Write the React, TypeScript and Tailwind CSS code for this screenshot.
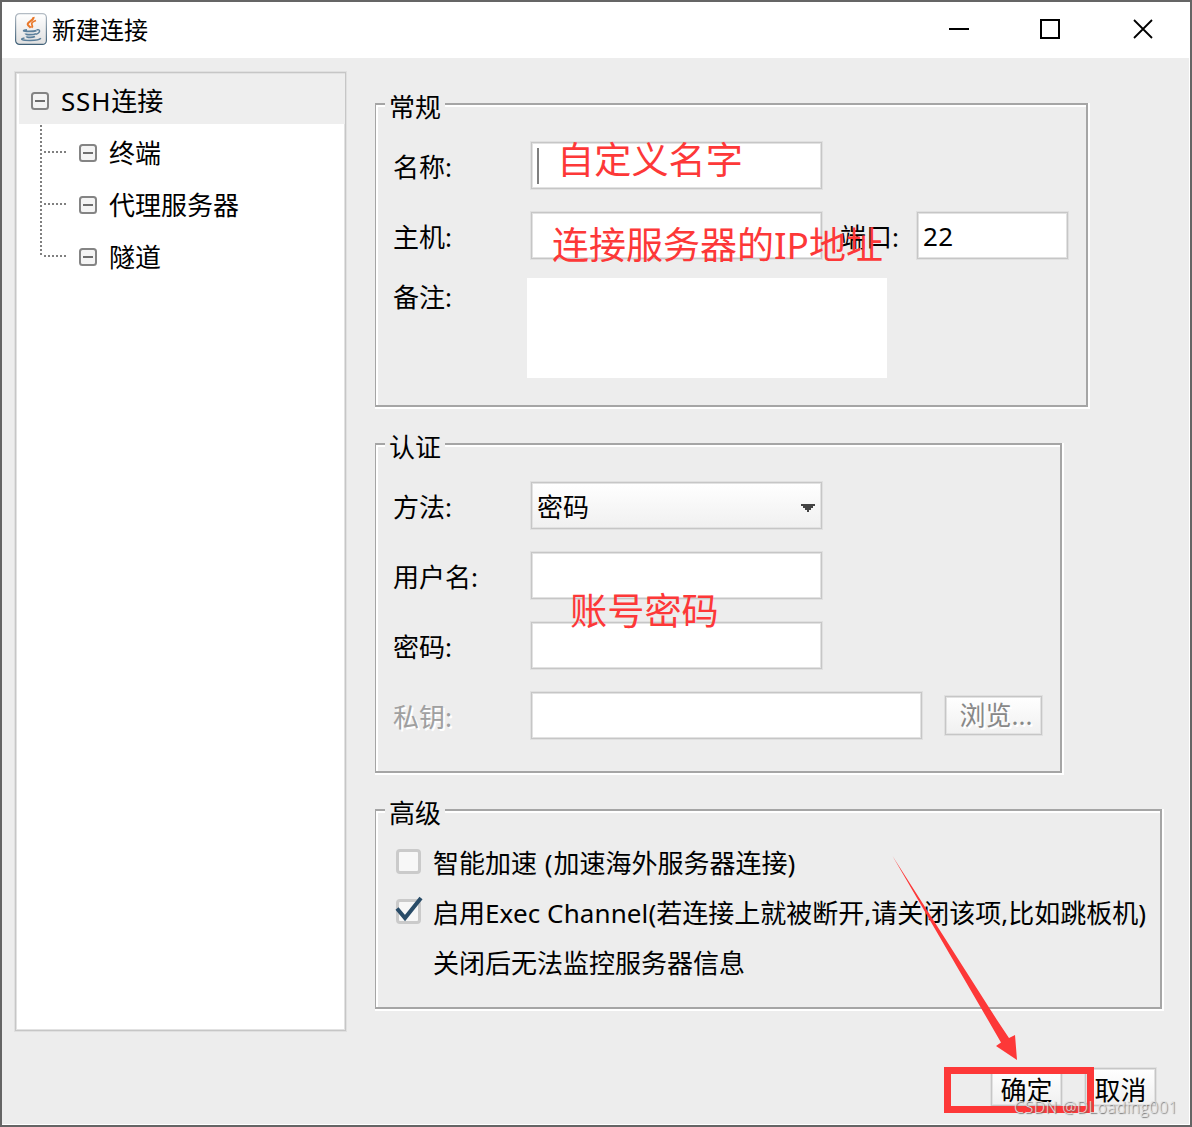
const boxShadow =
  'border border-[#c6c6c6] shadow-[0_0_0_1px_#e0e0e0,inset_0_0_0_1px_#e2e2e2]'

const JavaIcon = () => (
  <svg width="32" height="32" viewBox="0 0 32 32" fill="none">
    <defs>
      <linearGradient id="tile" x1="0" y1="0" x2="0" y2="1">
        <stop offset="0" stopColor="#fff" />
        <stop offset="1" stopColor="#e0e0e0" />
      </linearGradient>
      <linearGradient id="edge" x1="0" y1="0" x2="0" y2="1">
        <stop offset="0" stopColor="#b4bcc4" />
        <stop offset="1" stopColor="#3f6078" />
      </linearGradient>
    </defs>
    <rect x=".6" y=".6" width="30.8" height="30.8" rx="4" fill="url(#tile)" stroke="url(#edge)" strokeWidth="1.2" />
    <path d="M18.500 4c.8 3.500-6.300 4.500-5.700 7.500.3 1.300 2 2.200 2.900 3.200" stroke="#e9782a" strokeWidth="2.200" />
    <path d="M21 7.500c-3 1-4.700 2.200-4.200 3.700.4 1.100 1.400 1.800-.3 3.500" stroke="#e9782a" strokeWidth="1.800" />
    <path d="M12 16.800c-5 .7-4.500 1.600 2 1.600 3 0 6-.3 7.500-.8M10.500 20.500c-.3 1.500 7.500 1.500 10.500.2M11.500 23.300c.2 1.400 6 1.400 8.500.2" stroke="#5b7f9b" strokeWidth="1.700" />
    <path d="M21.500 17c4-1.200 4.500 2.600-.7 4.400" stroke="#5b7f9b" strokeWidth="1.400" />
    <path d="M9.500 25c-5.500 1.100-2.500 2.500 5.500 2.500 7 0 10-.9 10.800-2.300" stroke="#5b7f9b" strokeWidth="1.500" />
  </svg>
)

const MinusIcon = () => (
  <svg width="18" height="18" viewBox="0 0 18 18" className="shrink-0">
    <rect x="1" y="1" width="16" height="16" rx="2.500" fill="#f4f4f4" stroke="#848484" strokeWidth="2" />
    <path d="M4 9h10" stroke="#6e6e6e" strokeWidth="2" />
  </svg>
)

const Group = ({ title, className, children }: { title: string; className: string; children: React.ReactNode }) => (
  <section
    className={`border-2 border-l border-[#a5a5a5] pl-[17px] shadow-[2px_0_0_#fff,0_2px_0_#fff,2px_2px_0_#fff,inset_2px_2px_0_#fff] ${className}`}
  >
    <h2 className="-mt-[14px] -ml-2 h-8 w-[60px] bg-[#ededed] pl-1 leading-8">{title}</h2>
    {children}
  </section>
)

const Field = ({ label, width = 'w-[291px]', disabled = false, children }: {
  label: string
  width?: string
  disabled?: boolean
  children?: React.ReactNode
}) => (
  <div className="mb-[23px] flex h-[47px] items-center">
    <span className={`w-[138px] shrink-0 pt-0.5 ${disabled ? 'text-[#a0a0a0] [text-shadow:2px_2px_0_#fff]' : ''}`}>
      {label}
    </span>
    <div className={`h-[47px] shrink-0 bg-white ${boxShadow} ${width}`} />
    {children}
  </div>
)

const Button = ({ children }: { children: string }) => (
  <button
    className={`h-[38px] w-[71px] bg-gradient-to-b from-white to-[#f0f0f0] pt-1 text-center leading-[34px] whitespace-nowrap ${boxShadow}`}
  >
    {children}
  </button>
)

const App = () => {
  const nodes = ['终端', '代理服务器', '隧道']

  return (
    <div className="relative flex h-[1127px] w-[1192px] flex-col overflow-hidden border-2 border-[#656565] bg-[#ededed] font-['Noto_Sans','Noto_Sans_CJK_SC',sans-serif] text-[26px] leading-9 text-black">
      <header className="flex h-14 shrink-0 items-center bg-white pl-[13px]">
        <div className="-mt-0.5">
          <JavaIcon />
        </div>
        <h1 className="ml-[5px] text-2xl leading-9">新建连接</h1>
        <svg width="206" height="22" className="-mt-0.5 mr-[35px] ml-auto" fill="none" stroke="#000" strokeWidth="2">
          <path d="M0 11h20" />
          <path d="M92 2h18v18h-18z" />
          <path d="M185 2l18 18M203 2l-18 18" strokeWidth="1.800" />
        </svg>
      </header>

      <div className="flex flex-1 border-r border-b border-white">
        <nav className={`mt-[14px] ml-[13px] h-[959px] w-[331px] shrink-0 bg-white ${boxShadow}`}>
          <div className="mt-px ml-[3px] flex h-[50px] items-center bg-[#eee] pt-1 pl-3">
            <MinusIcon />
            <span className="ml-3">
              <span className="tracking-[0.8px]">SSH</span>连接
            </span>
          </div>
          <div className="flex">
            <svg width="26" height="134" className="ml-6 shrink-0" stroke="#808080" strokeWidth="2" strokeDasharray="2 2">
              <path d="M1 1v132M4 28h22M4 80h22M4 132h22" />
            </svg>
            <ul className="pt-[3px]">
              {nodes.map((node) => (
                <li key={node} className="flex h-[52px] items-center pl-[13px]">
                  <MinusIcon />
                  <span className="ml-3">{node}</span>
                </li>
              ))}
            </ul>
          </div>
        </nav>

        <main className="ml-[29px] flex flex-1 flex-col pt-[45px]">
          <Group title="常规" className="h-[304px] w-[713px]">
            <div className="pt-[19px]">
              <Field label="名称:">
                <span className="-ml-[285px] h-9 w-0.5 bg-[#808080]" />
              </Field>
              <Field label="主机:">
                <span className="w-[95px] pt-0.5 pl-[18px]">端口:</span>
                <div className={`flex h-[47px] w-[151px] items-center bg-white pl-[5px] tracking-[0.5px] ${boxShadow}`}>
                  22
                </div>
              </Field>
            </div>
            <div className="-mt-1 flex">
              <span className="w-[134px] pt-px">备注:</span>
              <div className="h-[100px] w-[360px] bg-white" />
            </div>
          </Group>

          <Group title="认证" className="mt-9 h-[330px] w-[687px]">
            <div className="pt-[19px]">
              <div className="mb-[23px] flex h-[47px] items-center">
                <span className="w-[138px] pt-0.5">方法:</span>
                <div
                  className={`flex h-[47px] w-[291px] items-center justify-between bg-gradient-to-b from-white to-[#f0f0f0] pt-0.5 pr-1.5 pl-[5px] ${boxShadow}`}
                >
                  密码
                  <svg width="14" height="8" className="mt-0.5" fill="#444">
                    <path d="M0 0h14v2h-2v2h-2v2H8v2H6V6H4V4H2V2H0z" />
                  </svg>
                </div>
              </div>
              <Field label="用户名:" />
              <Field label="密码:" />
              <Field label="私钥:" width="w-[391px]" disabled>
                <button
                  className={`ml-[23px] h-[39px] w-[97px] bg-gradient-to-b from-white to-[#f0f0f0] pl-[5px] text-center leading-[35px] text-[#888] [text-shadow:2px_2px_0_#fff] ${boxShadow}`}
                >
                  浏览...
                </button>
              </Field>
            </div>
          </Group>

          <Group title="高级" className="mt-9 h-[200px] w-[787px]">
            <div className="mt-0.5 flex h-[50px] items-center pt-2.5 pl-[3px]">
              <span className="size-[25px] rounded-sm border-[3px] border-[#cacaca] bg-[#f7f7f7]" />
              <span className="ml-3 pt-[3px] whitespace-nowrap">
                智能加速<span className="tracking-[1px]"> (</span>加速海外服务器连接)
              </span>
            </div>
            <div className="flex h-[50px] items-center pt-2.5 pl-[3px]">
              <span className="relative size-[25px] shrink-0 rounded-sm border-[3px] border-[#cacaca] bg-[#f7f7f7]">
                <svg width="30" height="30" className="absolute -top-[7px] -left-1" fill="none" stroke="#294c68" strokeWidth="4">
                  <path d="M2 13.500l8 9.500L26 3" />
                </svg>
              </span>
              <span className="ml-3 pt-[3px] whitespace-nowrap">
                启用<span className="tracking-[0.1px]">Exec Channel(</span>若连接上就被断开,请关闭该项,比如跳板机)
              </span>
            </div>
            <p className="pt-[14px] pl-10">关闭后无法监控服务器信息</p>
          </Group>

          <footer className="mt-[59px] mr-[33px] flex justify-end gap-[23px]">
            <Button>确定</Button>
            <Button>取消</Button>
          </footer>
        </main>
      </div>

      {/* annotations over the dialog */}
      <div className="pointer-events-none absolute inset-0 text-[37.2px] leading-[50px] whitespace-nowrap text-[#fd3838]">
        <span className="absolute top-[133px] left-[555px]">自定义名字</span>
        <span className="absolute top-[218px] left-[550px] text-[37px]">连接服务器的IP地址</span>
        <span className="absolute top-[584px] left-[568px]">账号密码</span>
        <div className="absolute top-[1065px] left-[942px] h-[46px] w-[150px] border-[7px] border-[#fd3838]" />
        <svg width="130" height="210" viewBox="890 855 130 210" className="absolute top-[853px] left-[888px]" fill="#fd3838">
          <path d="M892.500 856L988 1020 1001 1042.500 996 1046 1017 1060 1015 1035 1009 1038 997 1020z" />
        </svg>
        <span className="absolute top-[1093px] left-[1012px] font-['Open_Sans',sans-serif] text-base leading-6 font-light tracking-[0.5px] text-[#e4e4e4] [text-shadow:1px_1px_1px_#666]">
          CSDN @DLoading001
        </span>
      </div>
    </div>
  )
}

export default App
